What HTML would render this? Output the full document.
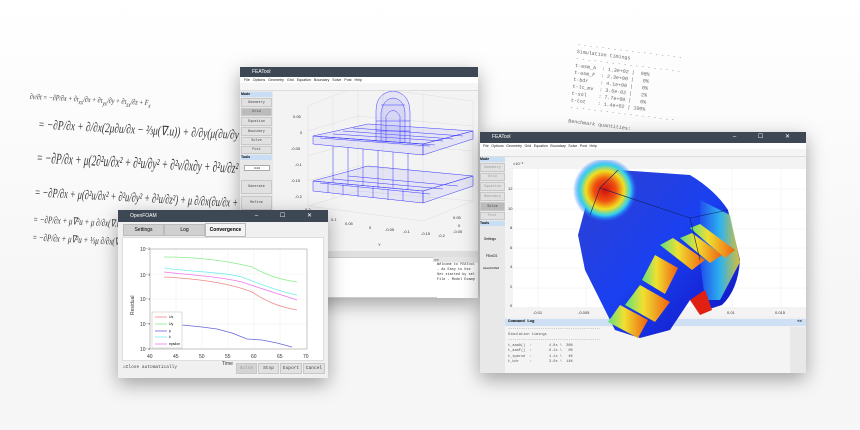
<!DOCTYPE html>
<html><head><meta charset="utf-8"><style>
*{margin:0;padding:0;box-sizing:border-box}
body{width:860px;height:430px;background:#f6f6f6;position:relative;overflow:hidden;font-family:"Liberation Sans",sans-serif}
.abs{position:absolute}
.eq{position:absolute;font-family:"Liberation Serif",serif;font-style:italic;color:#333;white-space:nowrap;transform-origin:left center}
.win{position:absolute;background:#f0f0f0;box-shadow:0 6px 18px rgba(0,0,0,.35);overflow:hidden}
.tb{position:absolute;left:0;right:0;top:0;background:#3d4854;color:#fff;font-size:5px;padding-left:12px}
.mono{font-family:"Liberation Mono",monospace}
.btn{position:absolute;background:#e1e1e1;border:1px solid #c8c8c8;font-size:3.5px;text-align:center;color:#444;font-family:"Liberation Mono",monospace}
</style></head><body>
<div class="abs" style="left:0;top:0;width:860px;height:300px;background:linear-gradient(#fff,#f6f6f6)"></div>

<!-- equations -->
<div style="position:absolute;left:30px;top:92px;transform:rotate(3deg);transform-origin:left top">
<div class="eq" style="left:0;top:0;font-size:8px;transform:scaleX(.75)">∂v/∂t = −∂P/∂x + ∂τ<sub>xx</sub>/∂x + ∂τ<sub>yx</sub>/∂y + ∂τ<sub>zx</sub>/∂z + F<sub>x</sub></div>
<div class="eq" style="left:10px;top:24px;font-size:13px;transform:scaleX(.72)">= −∂P/∂x + ∂/∂x(2μ∂u/∂x − ⅔μ(∇.u)) + ∂/∂y(μ(∂u/∂y + ∂v/∂x)) + ∂/∂z (μ (</div>
<div class="eq" style="left:10px;top:56px;font-size:15px;transform:scaleX(.62)">= −∂P/∂x + μ(2∂²u/∂x² + ∂²u/∂y² + ∂²v/∂x∂y + ∂²u/∂z² + ∂²w/∂x∂z − ⅔ ∂/∂x (∇.u)) + F<sub>x</sub></div>
<div class="eq" style="left:10px;top:92px;font-size:13px;transform:scaleX(.65)">= −∂P/∂x + μ(∂²u/∂x² + ∂²u/∂y² + ∂²u/∂z²) + μ ∂/∂x(∂u/∂x + ∂v</div>
<div class="eq" style="left:10px;top:122px;font-size:10px;transform:scaleX(.7)">= −∂P/∂x + μ∇²u + μ ∂/∂x(∇.u) − ⅔μ ∂</div>
<div class="eq" style="left:10px;top:140px;font-size:10px;transform:scaleX(.7)">= −∂P/∂x + μ∇²u + ⅓μ ∂/∂x(∇.u) + F<sub>x</sub></div>
</div>

<!-- top right text -->
<div class="mono" style="position:absolute;left:578px;top:42px;font-size:5px;color:#666;line-height:7px;transform:rotate(7deg);transform-origin:left top;white-space:pre">- - - - - - - - - - - - - - - - - -
Simulation timings
- - - - - - - - - - - - - - - - - -
t-asm_A  : 1.3e+02 |  98%
t-asm_F  : 2.3e+00 |   0%
t-bdr    : 4.1e+00 |   0%
t-lc_mv  : 3.6e-02 |   2%
t-sol    : 7.7e+00 |   0%
t-tot    : 1.4e+02 | 100%
- - - - - - - - - - - - - - - - - -

Benchmark quantities:

Drag coefficient:
lift coeff</div>

<!-- middle window -->
<div class="win" style="left:240px;top:67px;width:238px;height:231px">
<div class="tb" style="height:10px;line-height:10px">FEATool</div>
<div class="abs" style="top:10px;left:0;right:0;height:6px;background:#fff;font-size:3.6px;line-height:6px;padding-left:4px;color:#222;word-spacing:2px">File Options Geometry Grid Equation Boundary Solve Post Help</div>
<div class="abs" style="top:16px;left:0;right:0;height:8px;background:#f5f5f5;border-bottom:1px solid #ddd"></div>
<div class="abs" style="top:24px;left:0;width:33px;height:160px;background:#e8e8e8"></div>
<div class="abs" style="top:25px;left:1px;width:31px;height:5px;background:#c9def5;font-size:3.5px;font-weight:bold">Mode</div>
<div class="btn" style="left:1px;top:31px;width:31px;height:9px;line-height:8px">Geometry</div>
<div class="btn" style="left:1px;top:41px;width:31px;height:8px;line-height:7px;background:#bbb">Grid</div>
<div class="btn" style="left:1px;top:50px;width:31px;height:9px;line-height:8px">Equation</div>
<div class="btn" style="left:1px;top:60px;width:31px;height:9px;line-height:8px">Boundary</div>
<div class="btn" style="left:1px;top:70px;width:31px;height:8px;line-height:7px">Solve</div>
<div class="btn" style="left:1px;top:79px;width:31px;height:8px;line-height:7px">Post</div>
<div class="abs" style="top:88px;left:1px;width:31px;height:5px;background:#c9def5;font-size:3.5px;font-weight:bold">Tools</div>
<div class="abs" style="top:98px;left:4px;width:26px;height:6px;background:#fff;border:1px solid #aaa;font-size:3px;text-align:center">0.04</div>
<div class="btn" style="left:1px;top:113px;width:31px;height:14px;line-height:13px">Generate</div>
<div class="btn" style="left:1px;top:129px;width:31px;height:14px;line-height:13px">Refine</div>
<div class="abs" style="top:24px;left:33px;right:0;height:160px;background:#f3f3f3"></div>
<svg class="abs" style="left:33px;top:24px" width="205" height="160" viewBox="0 0 205 160">
<g stroke="#ddd" stroke-width=".5" fill="none">
<path d="M35 15 L35 115 L150 130 L200 110 L200 10 L85 -5 Z M35 115 L85 100 L200 110 M85 100 L85 -5"/>
<path d="M35 40 L85 25 L200 35 M35 65 L85 50 L200 60 M35 90 L85 75 L200 85 M60 108 L60 7 M110 104 L110 -2 M150 107 L150 2"/>
</g>
<g fill="rgba(120,120,255,.12)" stroke="#3b3bff" stroke-width=".5">
<path d="M40 90 L95 75 L200 85 L150 100 Z"/>
<path d="M40 90 L40 100 L150 112 L150 100 Z"/>
<path d="M150 100 L200 85 L200 95 L150 112 Z"/>
<path d="M40 45 L95 33 L200 40 L150 53 Z"/>
<path d="M40 45 L40 53 L150 64 L150 53 Z"/>
<path d="M150 53 L200 40 L200 48 L150 64 Z"/>
<path d="M60 55 L60 92 M75 56 L75 94 M90 58 L90 95 M105 59 L105 97 M120 61 L120 98 M135 62 L135 99 M55 102 L55 92 M70 104 L70 93 M85 106 L85 95 M100 107 L100 96 M115 109 L115 98 M130 110 L130 99"/>
<path d="M47 47 L157 55 M52 46 L162 54 M60 43 L170 50 M70 40 L180 48 M80 37 L190 45 M47 92 L157 103 M60 88 L170 98 M75 85 L185 95"/>
<path d="M103 50 L103 20 Q103 2 120 0 Q137 2 137 22 L137 52 Z"/>
<path d="M108 50 L108 22 Q110 8 120 7 Q131 8 132 22 L132 52 M113 51 L113 25 Q120 14 127 25 L127 52 M103 30 L137 30 M103 40 L137 40 M108 14 L132 14"/>
</g>
<g font-size="4" fill="#333" font-family="Liberation Sans">
<text x="20" y="27">0.05</text><text x="27" y="43">0</text><text x="18" y="59">-0.05</text><text x="22" y="75">-0.1</text><text x="18" y="91">-0.15</text><text x="22" y="107">-0.2</text>
<text x="32" y="120">0.2</text><text x="44" y="125">0.15</text><text x="58" y="130">0.1</text><text x="72" y="134">0.05</text><text x="96" y="138">0</text><text x="112" y="140">-0.05</text><text x="130" y="142">-0.1</text><text x="148" y="144">-0.15</text><text x="165" y="146">-0.2</text>
<text x="180" y="128">0.05</text><text x="185" y="136">0</text><text x="180" y="142">-0.05</text><text x="105" y="155">Y</text>
</g>
</svg>
<div class="abs" style="top:184px;left:33px;right:0;height:6px;background:#dfdfdf"></div>
<div class="abs" style="top:190px;left:0;width:33px;height:41px;background:#e8e8e8"></div>
<div class="abs" style="top:190px;left:45px;width:156px;height:41px;background:#fff;border:1px solid #ccc"></div>
<div class="abs" style="top:190px;left:193px;width:45px;height:5px;background:#e5e5e5;font-size:4px">&nbsp;&gt;&gt;</div>
<div class="abs mono" style="top:196px;left:197px;width:41px;height:35px;background:#fff;font-size:3.5px;line-height:5px;white-space:pre;color:#333">Welcome to FEATool
- As Easy to Use
Get started by sel
File - Model Examp</div>
</div>

<!-- openfoam window -->
<div class="win" style="left:118px;top:210px;width:210px;height:168px;background:#f0f0f0">
<div class="tb" style="height:12px;line-height:12px;font-size:5px">OpenFOAM<span style="position:absolute;right:6px;font-size:6px;letter-spacing:10px">– ☐ ✕</span></div>
<div class="abs" style="top:14px;left:5px;width:41px;height:12px;background:#d0d0d0;border:1px solid #bbb;font-size:5px;text-align:center;line-height:11px">Settings</div>
<div class="abs" style="top:14px;left:46px;width:41px;height:12px;background:#d0d0d0;border:1px solid #bbb;font-size:5px;text-align:center;line-height:11px">Log</div>
<div class="abs" style="top:13px;left:87px;width:41px;height:14px;background:#f4f4f4;border:1px solid #bbb;font-size:5px;font-weight:bold;text-align:center;line-height:13px">Convergence</div>
<div class="abs" style="top:27px;left:4px;width:202px;height:124px;background:#fff;border:1px solid #ddd"></div>
<svg class="abs" style="left:4px;top:27px" width="202" height="130" viewBox="0 0 202 130">
<rect x="28" y="12" width="157" height="100" fill="#fff" stroke="#888" stroke-width=".5"/>
<g stroke="#eee" stroke-width=".5"><path d="M54 12V112M80 12V112M106 12V112M132 12V112M158 12V112M28 37H185M28 62H185M28 87H185"/></g>
<g fill="none" stroke-width=".8">
<path d="M42 20 C80 20 110 25 130 30 C145 38 155 42 175 45" stroke="#8e8"/>
<path d="M42 31 C70 35 100 35 120 40 C140 48 160 55 175 58" stroke="#7ee"/>
<path d="M42 35 C70 38 100 40 120 45 C140 52 160 58 175 63" stroke="#e7e"/>
<path d="M42 40 C80 42 110 47 130 55 C145 65 158 70 175 73" stroke="#e88"/>
<path d="M42 85 L60 88 L80 90 L95 92 L110 96 L125 102 L140 103 L155 106 L170 110" stroke="#66d"/>
</g>
<rect x="30" y="75" width="30" height="36" fill="#fff" stroke="#aaa" stroke-width=".4"/>
<g font-size="3.5" font-family="Liberation Sans"><text x="47" y="81">Ux</text><text x="47" y="88">Uy</text><text x="47" y="95">p</text><text x="47" y="101">k</text><text x="47" y="108">epsilon</text></g>
<g stroke-width=".8"><path d="M33 80H45" stroke="#e88"/><path d="M33 87H45" stroke="#8e8"/><path d="M33 94H45" stroke="#66d"/><path d="M33 100H45" stroke="#7ee"/><path d="M33 107H45" stroke="#e7e"/></g>
<g font-size="5" font-family="Liberation Sans" fill="#333"><text x="18" y="14">10⁻²</text><text x="18" y="40">10⁻³</text><text x="18" y="64">10⁻⁴</text><text x="18" y="89">10⁻⁵</text><text x="18" y="114">10⁻⁶</text>
<text x="25" y="121">40</text><text x="51" y="121">45</text><text x="77" y="121">50</text><text x="103" y="121">55</text><text x="129" y="121">60</text><text x="155" y="121">65</text><text x="181" y="121">70</text><text x="100" y="128">Time</text>
<text transform="translate(12 78) rotate(-90)">Residual</text></g>
</svg>
<div class="abs mono" style="top:155px;left:5px;font-size:4.5px;color:#444">☑Close automatically</div>
<div class="btn" style="left:118px;top:153px;width:21px;height:11px;line-height:10px;font-size:4.5px;color:#999;background:#d4d4d4">Solve</div>
<div class="btn" style="left:140px;top:153px;width:21px;height:11px;line-height:10px;font-size:4.5px">Stop</div>
<div class="btn" style="left:162px;top:153px;width:22px;height:11px;line-height:10px;font-size:4.5px">Export</div>
<div class="btn" style="left:185px;top:153px;width:22px;height:11px;line-height:10px;font-size:4.5px">Cancel</div>
</div>

<!-- right window -->
<div class="win" style="left:480px;top:132px;width:326px;height:241px">
<div class="tb" style="height:11px;line-height:11px">FEATool<span style="position:absolute;right:6px;font-size:6px;letter-spacing:10px">– ☐ ✕</span></div>
<div class="abs" style="top:11px;left:0;right:0;height:6px;background:#fff;font-size:3.6px;line-height:6px;padding-left:3px;color:#222;word-spacing:1.5px">File Options Geometry Grid Equation Boundary Solve Post Help</div>
<div class="abs" style="top:17px;left:0;right:0;height:8px;background:#f5f5f5;border-bottom:1px solid #ddd"></div>
<div class="abs" style="top:25px;left:0;width:25px;height:216px;background:#e8e8e8"></div>
<div class="abs" style="top:25px;left:0;width:25px;height:5px;background:#c9def5;font-size:3.5px;font-weight:bold">Mode</div>
<div class="btn" style="left:0;top:31px;width:25px;height:9px;line-height:8px;color:#999">Geometry</div>
<div class="btn" style="left:0;top:41px;width:25px;height:8px;line-height:7px;color:#999">Grid</div>
<div class="btn" style="left:0;top:50px;width:25px;height:9px;line-height:8px;color:#999">Equation</div>
<div class="btn" style="left:0;top:60px;width:25px;height:9px;line-height:8px;color:#999">Boundary</div>
<div class="btn" style="left:0;top:70px;width:25px;height:9px;line-height:8px;background:#bbb">Solve</div>
<div class="btn" style="left:0;top:80px;width:25px;height:8px;line-height:7px;color:#999">Post</div>
<div class="abs" style="top:89px;left:0;width:25px;height:5px;background:#c9def5;font-size:3.5px;font-weight:bold">Tools</div>
<div class="abs" style="top:105px;left:4px;font-size:3.3px">Settings</div>
<div class="abs" style="top:122px;left:6px;font-size:3.3px">FEniCS</div>
<div class="abs" style="top:134px;left:3px;font-size:3px">OpenFOAM</div>
<div class="abs" style="top:25px;left:25px;right:0;height:160px;background:#f3f3f3"></div>
<svg class="abs" style="left:25px;top:25px" width="301" height="160" viewBox="0 0 301 160">
<rect x="8" y="12" width="293" height="138" fill="#fff"/>
<g stroke="#eee" stroke-width=".5"><path d="M33 12V150M81 12V150M130 12V150M178 12V150M227 12V150M276 12V150M8 32H301M8 52H301M8 72H301M8 91H301M8 111H301M8 131H301"/></g>
<g font-size="4" fill="#333" font-family="Liberation Sans"><text x="3" y="33">12</text><text x="3" y="53">10</text><text x="5" y="72">8</text><text x="5" y="92">6</text><text x="5" y="111">4</text><text x="5" y="131">2</text><text x="5" y="150">0</text><text x="28" y="157">-0.01</text><text x="73" y="157">-0.005</text><text x="222" y="157">0.01</text><text x="270" y="157">0.015</text><text x="8" y="8">×10⁻³</text></g>
</svg>
<div class="abs mono" style="top:187px;left:25px;right:0;height:7px;background:#cfe0f5;font-size:4px;font-weight:bold;padding-left:3px;line-height:7px">Command Log<span style="position:absolute;right:4px">&lt;&lt;</span></div>
<div class="abs mono" style="top:195px;left:25px;width:285px;height:46px;background:#f4f4f4;font-size:3.6px;line-height:5.5px;white-space:pre;color:#555;padding-left:3px">-------------------------------------------
Simulation timings
-------------------------------------------
t_asmA()  :        4.8s \  36%
t_asmF()  :        0.1s \   0%
t_sparse  :        1.1s \   4%
t_bdr     :        3.0s \  14%</div>
<div class="abs" style="top:195px;left:310px;width:16px;height:46px;background:#e8e8e8"></div>
</div>

<!-- 3D shape -->
<svg class="abs" style="left:560px;top:160px" width="200" height="190" viewBox="560 160 200 190">
<defs>
<radialGradient id="hot" cx="0.5" cy="0.5" r="0.5"><stop offset="0" stop-color="#d01010"/><stop offset=".35" stop-color="#f05010"/><stop offset=".6" stop-color="#f0e020"/><stop offset=".8" stop-color="#30d0f0"/><stop offset="1" stop-color="#2060ff" stop-opacity="0"/></radialGradient>
<linearGradient id="body" x1="0" y1="0" x2="1" y2="1"><stop offset="0" stop-color="#3040d0"/><stop offset=".5" stop-color="#1a40f0"/><stop offset="1" stop-color="#1010c0"/></linearGradient>
<linearGradient id="stripe" x1="0" y1="0" x2="1" y2="0"><stop offset="0" stop-color="#60e080"/><stop offset=".4" stop-color="#f0e030"/><stop offset="1" stop-color="#f06010"/></linearGradient>
<linearGradient id="right" x1="0" y1="0" x2="1" y2="0"><stop offset="0" stop-color="#2050f0"/><stop offset=".5" stop-color="#30c0f0"/><stop offset="1" stop-color="#f0d020"/></linearGradient>
</defs>
<path d="M586 205 Q592 180 618 170 L690 175 Q715 190 728 210 L740 260 Q738 290 722 305 L700 312 L690 300 L670 330 L640 338 L615 330 L600 300 L585 270 L578 235 Z" fill="url(#body)"/>
<path d="M700 200 L730 215 L740 262 L720 300 L705 300 L700 260 Z" fill="url(#right)" opacity=".9"/>
<circle cx="605" cy="190" r="32" fill="url(#hot)"/>
<path d="M642 280 L655 255 L678 268 L665 294 Z" fill="url(#stripe)"/>
<path d="M660 245 L673 238 L705 260 L692 270 Z" fill="url(#stripe)"/>
<path d="M680 238 L692 233 L722 255 L710 263 Z" fill="url(#stripe)"/>
<path d="M690 228 L700 224 L735 250 L725 258 Z" fill="url(#stripe)"/>
<path d="M625 305 L640 285 L670 302 L655 322 Z" fill="url(#stripe)"/>
<path d="M608 322 L620 305 L648 320 L638 338 Z" fill="url(#stripe)"/>
<path d="M690 300 L705 290 L712 310 L700 315 Z" fill="#e02010"/>
<path d="M618 170 L600 188 L690 218 L728 210 M600 188 L590 215 M690 218 L700 260" stroke="#102060" stroke-width=".6" fill="none"/>
</svg>
</body></html>
